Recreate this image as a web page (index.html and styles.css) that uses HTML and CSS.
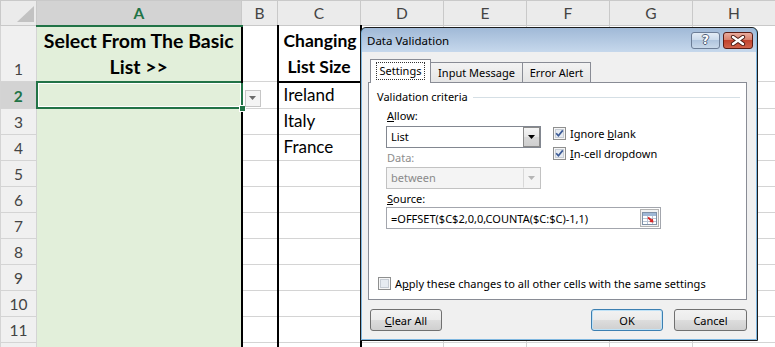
FILE: index.html
```html
<!DOCTYPE html>
<html>
<head>
  <title>Data Validation</title>
  <meta charset="UTF-8">
  <link rel="stylesheet" href="styles.css">
</head>
<body>
  <div class="sheet">
    <table class="grid">
      <colgroup>
        <col class="col-head">
        <col class="col-a">
        <col class="col-b">
        <col class="col-std">
        <col class="col-std">
        <col class="col-std">
        <col class="col-std">
        <col class="col-std">
        <col class="col-std">
      </colgroup>
      <tr class="head-row">
        <th class="corner">
          <svg width="36" height="24" viewBox="0 0 36 24"><polygon points="33,5 33,21 16,21" fill="#c2c2c2"/></svg>
        </th>
        <th class="active">A</th>
        <th>B</th>
        <th>C</th>
        <th>D</th>
        <th>E</th>
        <th>F</th>
        <th>G</th>
        <th>H</th>
      </tr>
      <tr class="row-1">
        <th class="row-label">1</th>
        <td class="a title title-big">Select From The Basic<br>List &gt;&gt;</td>
        <td class="b"></td>
        <td class="c title c-head">Changing<br>List Size</td>
        <td></td><td></td><td></td><td></td><td></td>
      </tr>
      <tr>
        <th class="row-label active">2</th>
        <td class="a sel">
          <span class="fill-handle"></span>
          <span class="cell-drop"><svg width="7" height="4" viewBox="0 0 7 4"><path d="M0 0h7L3.5 4z" fill="#6b6b6b"/></svg></span>
        </td>
        <td class="b"></td>
        <td class="c">Ireland</td>
        <td></td><td></td><td></td><td></td><td></td>
      </tr>
      <tr>
        <th class="row-label">3</th>
        <td class="a"></td><td class="b"></td><td class="c">Italy</td>
        <td></td><td></td><td></td><td></td><td></td>
      </tr>
      <tr>
        <th class="row-label">4</th>
        <td class="a"></td><td class="b"></td><td class="c">France</td>
        <td></td><td></td><td></td><td></td><td></td>
      </tr>
      <tr>
        <th class="row-label">5</th>
        <td class="a"></td><td class="b"></td><td class="c"></td>
        <td></td><td></td><td></td><td></td><td></td>
      </tr>
      <tr>
        <th class="row-label">6</th>
        <td class="a"></td><td class="b"></td><td class="c"></td>
        <td></td><td></td><td></td><td></td><td></td>
      </tr>
      <tr>
        <th class="row-label">7</th>
        <td class="a"></td><td class="b"></td><td class="c"></td>
        <td></td><td></td><td></td><td></td><td></td>
      </tr>
      <tr>
        <th class="row-label">8</th>
        <td class="a"></td><td class="b"></td><td class="c"></td>
        <td></td><td></td><td></td><td></td><td></td>
      </tr>
      <tr>
        <th class="row-label">9</th>
        <td class="a"></td><td class="b"></td><td class="c"></td>
        <td></td><td></td><td></td><td></td><td></td>
      </tr>
      <tr>
        <th class="row-label">10</th>
        <td class="a"></td><td class="b"></td><td class="c"></td>
        <td></td><td></td><td></td><td></td><td></td>
      </tr>
      <tr>
        <th class="row-label">11</th>
        <td class="a"></td><td class="b"></td><td class="c"></td>
        <td></td><td></td><td></td><td></td><td></td>
      </tr>
      <tr>
        <th class="row-label"></th>
        <td class="a"></td><td class="b"></td><td class="c"></td>
        <td></td><td></td><td></td><td></td><td></td>
      </tr>
    </table>

    <!-- Data Validation dialog -->
    <div class="dialog">
      <div class="title-bar">
        <span class="title-text">Data Validation</span>
        <span class="title-btn help-btn"><span class="help-mark">?</span></span>
        <span class="title-btn close-btn">
          <svg width="16" height="11" viewBox="0 0 16 11"><path d="M3 2L13 9M13 2L3 9" stroke="#4a1a12" stroke-width="4.2" stroke-linecap="round"/><path d="M3 2L13 9M13 2L3 9" stroke="#fff" stroke-width="2.4" stroke-linecap="round"/></svg>
        </span>
      </div>
      <div class="dialog-body">
        <div class="tabs">
          <div class="tab active"><span class="focus">Settings</span></div>
          <div class="tab tab-input">Input Message</div>
          <div class="tab tab-error">Error Alert</div>
        </div>
        <div class="panel">
          <div class="group-title">Validation criteria</div>
          <div class="criteria">
            <div class="criteria-top">
              <div class="criteria-fields">
                <div class="field-label"><u>A</u>llow:</div>
                <div class="combo">
                  <span class="combo-text">List</span>
                  <span class="combo-btn"><svg width="7" height="4" viewBox="0 0 7 4"><path d="M0 0h7L3.5 4z" fill="#000"/></svg></span>
                </div>
                <div class="field-label disabled">Data:</div>
                <div class="combo combo-disabled">
                  <span class="combo-text">between</span>
                  <span class="combo-btn"><svg width="7" height="4" viewBox="0 0 7 4"><path d="M0 0h7L3.5 4z" fill="#b5b5b5"/></svg></span>
                </div>
              </div>
              <div class="criteria-checks">
                <div class="check-row">
                  <svg class="check-box" width="13" height="13" viewBox="0 0 13 13"><rect x="0.5" y="0.5" width="12" height="12" fill="#f6f6f6" stroke="#8e8f8f"/><rect x="2.5" y="2.5" width="8" height="8" fill="#e6ebf1" stroke="#c6ccd4"/><path d="M3.2 6.3L5.4 8.8L9.8 3.4" fill="none" stroke="#3b5a96" stroke-width="1.7"/></svg>
                  <span>Ignore <u>b</u>lank</span>
                </div>
                <div class="check-row">
                  <svg class="check-box" width="13" height="13" viewBox="0 0 13 13"><rect x="0.5" y="0.5" width="12" height="12" fill="#f6f6f6" stroke="#8e8f8f"/><rect x="2.5" y="2.5" width="8" height="8" fill="#e6ebf1" stroke="#c6ccd4"/><path d="M3.2 6.3L5.4 8.8L9.8 3.4" fill="none" stroke="#3b5a96" stroke-width="1.7"/></svg>
                  <span><u>I</u>n-cell dropdown</span>
                </div>
              </div>
            </div>
            <div class="field-label source-label"><u>S</u>ource:</div>
            <div class="source-input">
              <span class="source-text">=OFFSET($C$2,0,0,COUNTA($C:$C)-1,1)</span>
              <span class="range-btn">
                <svg width="15" height="13" viewBox="0 0 15 13">
                  <rect x="0.5" y="0.5" width="14" height="12" fill="#fff" stroke="#7f90a6"/>
                  <rect x="1" y="1" width="13" height="3" fill="#9fb8d6"/>
                  <path d="M1 6.5h13M1 9.5h13M5.5 4v8M10.5 4v8" stroke="#b9c6d5"/>
                  <path d="M6 5.5L9.5 8.5" stroke="#d42424" stroke-width="2"/>
                  <path d="M11.5 10.5L7.3 10L10.8 6.5z" fill="#d42424"/>
                </svg>
              </span>
            </div>
          </div>
          <div class="check-row apply-row">
            <svg class="check-box" width="13" height="13" viewBox="0 0 13 13"><rect x="0.5" y="0.5" width="12" height="12" fill="#f6f6f6" stroke="#8e8f8f"/><rect x="2.5" y="2.5" width="8" height="8" fill="#e6ebf1" stroke="#c6ccd4"/></svg>
            <span>A<u>p</u>ply these changes to all other cells with the same settings</span>
          </div>
        </div>
        <div class="dialog-footer">
          <button class="btn"><u>C</u>lear All</button>
          <button class="btn btn-default">OK</button>
          <button class="btn btn-cancel">Cancel</button>
        </div>
      </div>
    </div>
  </div>
</body>
</html>
```

FILE: styles.css
```css
body {
  margin: 0;
  width: 775px;
  height: 347px;
  overflow: hidden;
  background: #fff;
}
.sheet {
  position: relative;
  width: 775px;
  height: 347px;
  overflow: hidden;
  font-family: Lato, "Liberation Sans", sans-serif;
}

/* Spreadsheet grid */
.grid {
  border-collapse: collapse;
  table-layout: fixed;
  width: 775px;
}
.col-head { width: 36px; }
.col-a { width: 205px; }
.col-b { width: 36px; }
.col-std { width: 83px; }
.grid tr { height: 26px; }
.grid .head-row { height: 25px; }
.grid .row-1 { height: 56px; }
.grid th,
.grid td {
  padding: 0;
  border: 1px solid #d4d4d4;
}
.grid td {
  padding: 0 5px 1px;
  font-size: 17px;
  line-height: 24px;
  color: #000;
  vertical-align: bottom;
  white-space: nowrap;
}
.head-row th {
  background: #ebebeb;
  border-color: #c9c9c9;
  font-weight: normal;
  font-size: 15.5px;
  color: #444;
  text-align: center;
  vertical-align: middle;
}
.head-row th.active {
  background: #d3d3d3;
  color: #217346;
  font-weight: 700;
  border-bottom: 2px solid #217346;
}
.head-row .corner {
  padding: 0;
  line-height: 0;
  background: #ebebeb;
}
.row-label {
  background: #f0f0f0;
  border-color: #d0d0d0 #c9c9c9 #d0d0d0 #d0d0d0;
  font-weight: normal;
  font-size: 15.5px;
  line-height: 24px;
  color: #444;
  text-align: center;
  vertical-align: bottom;
}
.row-label.active {
  background: #d3d3d3;
  color: #217346;
  font-weight: 700;
}
.grid .a {
  background: #e2efda;
  border-top-color: #e2efda;
  border-bottom-color: #e2efda;
  border-right: 2px solid #000;
}
.grid .b {
  border-right: 2px solid #000;
}
.grid .c {
  border-right: 2px solid #000;
}
.grid .c-head {
  border-bottom: 2px solid #000;
}
.grid .title {
  font-weight: 700;
  font-size: 17.5px;
  text-align: center;
  line-height: 26px;
  padding-bottom: 1px;
}
.grid .title-big {
  font-size: 19.5px;
}
.grid .sel {
  position: relative;
  border: 2px solid #217346;
  box-shadow: inset 0 0 0 1px #fff;
}
.fill-handle {
  position: absolute;
  right: -5px;
  bottom: -5px;
  width: 5px;
  height: 5px;
  background: #217346;
  border: 1px solid #fff;
}
.cell-drop {
  position: absolute;
  left: calc(100% + 4px);
  top: 7px;
  width: 14px;
  height: 15px;
  border: 1px solid #c6c6c6;
  background: #f4f4f4;
  display: flex;
  align-items: center;
  justify-content: center;
}

/* Dialog window */
.dialog {
  position: absolute;
  left: 360px;
  top: 27px;
  width: 398px;
  height: 314px;
  box-sizing: border-box;
  border: 1px solid #1c1c1c;
  border-radius: 6px 6px 0 0;
  background: #7fb7e0;
  padding: 0 1px 1px;
  display: flex;
  flex-direction: column;
  font-family: "Noto Sans", "Open Sans", sans-serif;
  font-size: 11px;
  color: #000;
}
.title-bar {
  flex: none;
  height: 24px;
  display: flex;
  align-items: center;
  padding: 0 3px 0 5px;
  background: linear-gradient(#a0b9d7, #c6d8ec);
  border-radius: 5px 5px 0 0;
}
.title-text {
  flex: 1;
  font-size: 11.5px;
}
.title-btn {
  height: 17px;
  box-sizing: border-box;
  border-radius: 3px;
  display: flex;
  align-items: center;
  justify-content: center;
}
.help-btn {
  width: 29px;
  border: 1px solid #6c7d96;
  background: linear-gradient(#e3ecf6, #cbdaeb 45%, #b0c5de 50%, #c8d8ea);
}
.help-mark {
  font-family: "DejaVu Sans", sans-serif;
  font-weight: 700;
  font-size: 12px;
  line-height: 12px;
  color: #fff;
  text-shadow: 1px 0 0 #4f5f77, -1px 0 0 #4f5f77, 0 1px 0 #4f5f77, 0 -1px 0 #4f5f77;
}
.close-btn {
  width: 30px;
  margin-left: 3px;
  border: 1px solid #5a1c14;
  background: linear-gradient(#eaab9d, #d8826e 45%, #c2432d 50%, #d0634b);
}
.dialog-body {
  flex: 1;
  background: #f0f0f0;
  padding: 7px 9px 0 6px;
  display: flex;
  flex-direction: column;
}

/* Tabs */
.tabs {
  display: flex;
  align-items: flex-end;
  height: 23px;
  margin-left: 2px;
  position: relative;
  z-index: 1;
}
.tab {
  height: 20px;
  box-sizing: border-box;
  border: 1px solid #898c95;
  border-bottom: none;
  background: linear-gradient(#f3f3f3, #e5e5e5);
  line-height: 19px;
  text-align: center;
  margin-left: -1px;
}
.tab.active {
  height: 24px;
  width: 61px;
  margin-left: 0;
  margin-bottom: -1px;
  background: #fff;
  position: relative;
  z-index: 1;
  padding-top: 3px;
  line-height: 16px;
}
.tab-input { width: 93px; }
.tab-error { width: 69px; }
.focus {
  display: inline-block;
  outline: 1px dotted #333;
  outline-offset: 0;
  padding: 0 3px;
}
.panel {
  height: 218px;
  box-sizing: border-box;
  border: 1px solid #898c95;
  background: #fff;
  padding: 6px 6px 9px 8px;
  display: flex;
  flex-direction: column;
}
.group-title {
  display: flex;
  align-items: center;
  gap: 5px;
  line-height: 16px;
}
.group-title::after {
  content: "";
  flex: 1;
  height: 1px;
  background: #d5dfe5;
}
.criteria {
  padding-left: 9px;
  margin-top: 3px;
}
.criteria-top {
  display: flex;
}
.criteria-fields {
  width: 155px;
}
.field-label {
  line-height: 16px;
  padding-left: 1px;
  margin-top: 2px;
}
.field-label:first-child {
  margin-top: 0;
}
.field-label.disabled {
  color: #8d8d8d;
}
.combo {
  height: 22px;
  box-sizing: border-box;
  border: 1px solid #828790;
  background: #fff;
  display: flex;
  align-items: stretch;
  margin-top: 2px;
}
.field-label.disabled + .combo {
  margin-top: 1px;
}
.combo-text {
  flex: 1;
  padding-left: 4px;
  line-height: 20px;
}
.combo-btn {
  width: 15px;
  border: 1px solid #8a8a8a;
  background: linear-gradient(#f5f5f5, #e6e6e6 50%, #d8d8d8 51%, #cfcfcf);
  display: flex;
  align-items: center;
  justify-content: center;
}
.combo-disabled {
  border-color: #c2c2c2;
  background: #f4f4f4;
  color: #8a8a8a;
}
.combo-disabled .combo-btn {
  border-color: #f4f4f4;
  border-left-color: #d8d8d8;
  background: #f4f4f4;
}
.criteria-checks {
  margin-left: 12px;
  padding-top: 15px;
}
.check-row {
  height: 20px;
  display: flex;
  align-items: center;
  gap: 4px;
}
.check-box {
  flex: none;
}
.source-label {
  margin-top: 2px;
}
.source-input {
  width: 275px;
  height: 22px;
  box-sizing: border-box;
  border: 1px solid #a3a6ad;
  background: #fff;
  display: flex;
  align-items: center;
}
.source-text {
  flex: 1;
  padding-left: 4px;
}
.range-btn {
  width: 19px;
  height: 18px;
  box-sizing: border-box;
  margin-right: 1px;
  border: 1px solid #b3b3b3;
  background: #f2f2f2;
  display: flex;
  align-items: center;
  justify-content: center;
}
.apply-row {
  margin-top: auto;
  margin-left: 1px;
  height: 14px;
}

/* Footer buttons */
.dialog-footer {
  display: flex;
  margin-top: 9px;
  padding-left: 2px;
}
.btn {
  width: 72px;
  height: 22px;
  box-sizing: border-box;
  padding: 0;
  border: 1px solid #707070;
  border-radius: 3px;
  background: linear-gradient(#f2f2f2, #ebebeb 50%, #dddddd 51%, #cfcfcf);
  font: inherit;
  color: #000;
}
.btn-default {
  margin-left: auto;
  border-color: #3c7fb1;
  box-shadow: inset 0 0 0 1px #bfe2f7;
}
.btn-cancel {
  width: 73px;
  margin-left: 11px;
}
```
